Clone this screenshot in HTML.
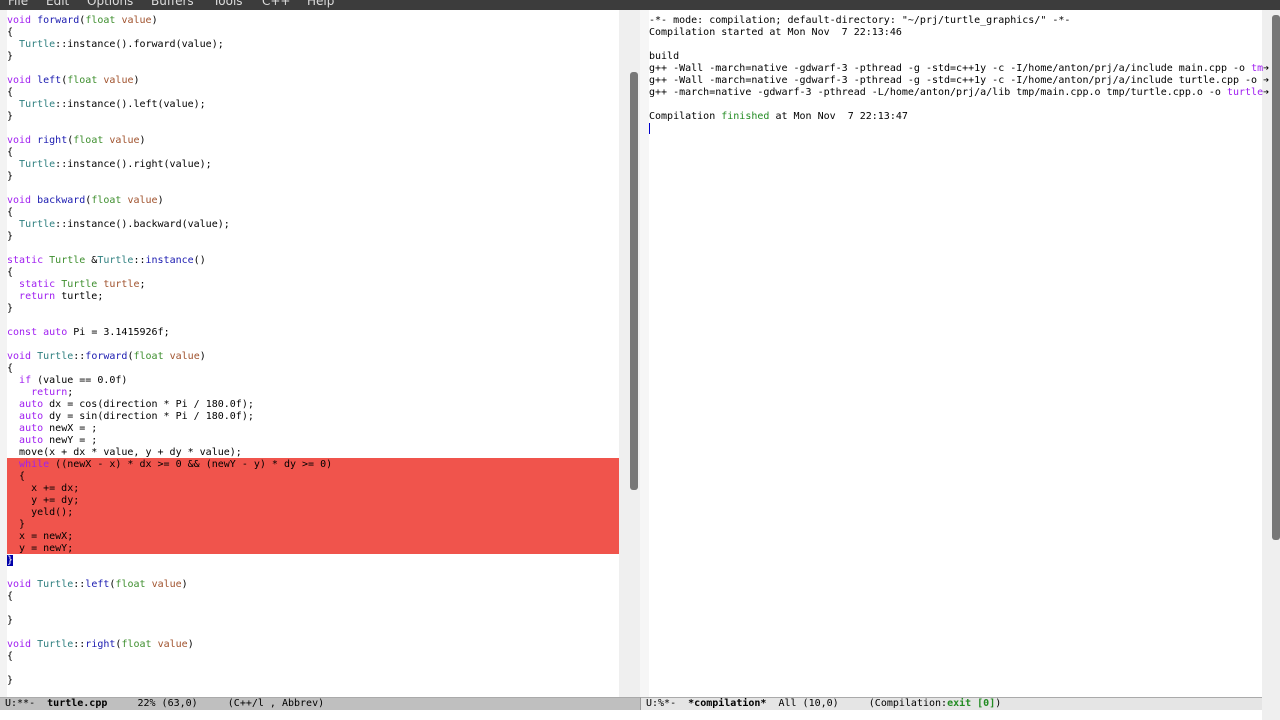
<!DOCTYPE html>
<html><head><meta charset="utf-8"><style>
*{margin:0;padding:0;box-sizing:border-box}
body{width:1280px;height:720px;overflow:hidden;background:#fff;position:relative;font-family:"DejaVu Sans Mono","Liberation Mono",monospace;font-size:10px;color:#000}
#menu{position:absolute;left:0;top:0;width:1280px;height:10px;background:#3c3c3c;overflow:hidden}
#menu span{position:absolute;top:-6px;color:#ddd;font-family:"DejaVu Sans","Liberation Sans",sans-serif;font-size:12px}
.pre{position:absolute;white-space:pre;line-height:12px}
.k{color:#a020f0}.t{color:#3f8f2f}.f{color:#1a1ab0}.v{color:#a0522d}.c{color:#2e7f7f}
#left{left:7px;top:15px}
#right{left:649px;top:15px}
#hl{position:absolute;left:7px;top:458px;width:612px;height:96px;background:#f0544c}
</style></head><body>
<div id="menu"><span style="left:8px">File</span><span style="left:46px">Edit</span><span style="left:87px">Options</span><span style="left:151px">Buffers</span><span style="left:213px">Tools</span><span style="left:262px">C++</span><span style="left:307px">Help</span></div>
<div style="position:absolute;left:0;top:10px;width:7px;height:687px;background:#f3f3f3"></div>
<div style="position:absolute;left:619px;top:10px;width:29px;height:687px;background:#efefef"></div>
<div style="position:absolute;left:640px;top:10px;width:9px;height:687px;background:#f6f6f6"></div>
<div style="position:absolute;left:630px;top:72px;width:8px;height:418px;background:#777;border-radius:3px"></div>
<div style="position:absolute;left:1262px;top:10px;width:18px;height:710px;background:#efefef"></div>
<div style="position:absolute;left:1272px;top:15px;width:8px;height:525px;background:#777;border-radius:3px"></div>
<div id="hl"></div>
<div class="pre" id="left"><span class="k">void</span> <span class="f">forward</span>(<span class="t">float</span> <span class="v">value</span>)
{
  <span class="c">Turtle</span>::instance().forward(value);
}

<span class="k">void</span> <span class="f">left</span>(<span class="t">float</span> <span class="v">value</span>)
{
  <span class="c">Turtle</span>::instance().left(value);
}

<span class="k">void</span> <span class="f">right</span>(<span class="t">float</span> <span class="v">value</span>)
{
  <span class="c">Turtle</span>::instance().right(value);
}

<span class="k">void</span> <span class="f">backward</span>(<span class="t">float</span> <span class="v">value</span>)
{
  <span class="c">Turtle</span>::instance().backward(value);
}

<span class="k">static</span> <span class="t">Turtle</span> &amp;<span class="c">Turtle</span>::<span class="f">instance</span>()
{
  <span class="k">static</span> <span class="t">Turtle</span> <span class="v">turtle</span>;
  <span class="k">return</span> turtle;
}

<span class="k">const</span> <span class="k">auto</span> Pi = 3.1415926f;

<span class="k">void</span> <span class="c">Turtle</span>::<span class="f">forward</span>(<span class="t">float</span> <span class="v">value</span>)
{
  <span class="k">if</span> (value == 0.0f)
    <span class="k">return</span>;
  <span class="k">auto</span> dx = cos(direction * Pi / 180.0f);
  <span class="k">auto</span> dy = sin(direction * Pi / 180.0f);
  <span class="k">auto</span> newX = ;
  <span class="k">auto</span> newY = ;
  move(x + dx * value, y + dy * value);
  <span class="k">while</span> ((newX - x) * dx &gt;= 0 &amp;&amp; (newY - y) * dy &gt;= 0)
  {
    x += dx;
    y += dy;
    yeld();
  }
  x = newX;
  y = newY;
<span style="background:#0000aa;color:#fff">}</span>

<span class="k">void</span> <span class="c">Turtle</span>::<span class="f">left</span>(<span class="t">float</span> <span class="v">value</span>)
{

}

<span class="k">void</span> <span class="c">Turtle</span>::<span class="f">right</span>(<span class="t">float</span> <span class="v">value</span>)
{

}</div>
<div class="pre" id="right">-*- mode: compilation; default-directory: "~/prj/turtle_graphics/" -*-
Compilation started at Mon Nov  7 22:13:46

build
g++ -Wall -march=native -gdwarf-3 -pthread -g -std=c++1y -c -I/home/anton/prj/a/include main.cpp -o <span class="k">tm</span><b>➔</b>
g++ -Wall -march=native -gdwarf-3 -pthread -g -std=c++1y -c -I/home/anton/prj/a/include turtle.cpp -o <b>➔</b>
g++ -march=native -gdwarf-3 -pthread -L/home/anton/prj/a/lib tmp/main.cpp.o tmp/turtle.cpp.o -o <span class="k">turtle</span><b>➔</b>

Compilation <span style="color:#228b22">finished</span> at Mon Nov  7 22:13:47
<span style="border-left:1px solid #0000cc"> </span></div>
<div class="pre" style="left:0;top:697px;width:640px;height:13px;background:#bfbfbf;border-top:1px solid #aaa;padding-left:5px;line-height:12px">U:**-  <b>turtle.cpp</b>     22% (63,0)     (C++/l , Abbrev)</div>
<div class="pre" style="left:640px;top:697px;width:622px;height:13px;background:#e5e5e5;border-top:1px solid #aaa;border-left:1px solid #999;padding-left:5px;line-height:12px">U:%*-  <b>*compilation*</b>  All (10,0)     (Compilation:<b style="color:#228b22">exit [0]</b>)</div>
</body></html>
